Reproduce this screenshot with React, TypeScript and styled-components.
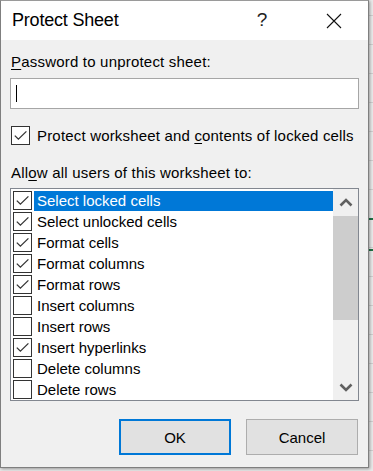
import React from "react";
import styled, { createGlobalStyle } from "styled-components";

const GlobalStyle = createGlobalStyle`
  html, body {
    margin: 0;
    padding: 0;
  }
  body {
    width: 373px;
    height: 471px;
    overflow: hidden;
    background-color: #e9e9e9;
    background-image:
      linear-gradient(#1e7145, #1e7145),
      linear-gradient(#1e7145, #1e7145),
      repeating-linear-gradient(to bottom, transparent 0 15px, #cfcfcf 15px 16px, transparent 16px 29px);
    background-size: 100% 2px, 100% 2px, 100% 100%;
    background-position: 0 218px, 0 249px, 0 0;
    background-repeat: no-repeat, no-repeat, repeat;
    font-family: "Liberation Sans", Arial, sans-serif;
  }
`;

const Dialog = styled.div`
  box-sizing: border-box;
  width: 369px;
  height: 468px;
  background: #f0f0f0;
  border: 1px solid #7f7f7f;
  border-top-color: #9a9a9a;
  box-shadow: 1px 1px 3px rgba(0, 0, 0, 0.35);
  display: flex;
  flex-direction: column;
`;

const TitleBar = styled.div`
  height: 39px;
  background: #ffffff;
  display: flex;
  align-items: center;
  padding-left: 11px;
`;

const Title = styled.div`
  flex: 1;
  font-size: 18px;
  color: #000;
  letter-spacing: -0.2px;
`;

const HelpGlyph = styled.div`
  width: 20px;
  font-size: 19px;
  font-weight: 300;
  color: #222;
  text-align: center;
  margin-right: 54px;
  padding-bottom: 2px;
`;

const CloseIcon = styled.svg`
  width: 16px;
  height: 16px;
  margin-right: 26px;
`;

const Body = styled.div`
  flex: 1;
  display: flex;
  flex-direction: column;
  padding: 12px 9px 0 9px;
  font-size: 15px;
  color: #000;
`;

const Label = styled.div<{ $gap?: number }>`
  height: 20px;
  line-height: 20px;
  padding-left: 1px;
  letter-spacing: 0.2px;
  margin-top: ${(p) => p.$gap ?? 0}px;
`;

const Accel = styled.span`
  text-decoration: underline;
  text-underline-offset: 2px;
`;

const Input = styled.div`
  box-sizing: border-box;
  margin-top: 6px;
  width: 349px;
  height: 31px;
  background: #fff;
  border: 1px solid #a6a6a6;
  display: flex;
  align-items: center;
  padding-left: 5px;
`;

const Caret = styled.div`
  width: 1px;
  height: 17px;
  background: #000;
`;

const CheckRow = styled.div`
  margin-top: 16px;
  height: 20px;
  display: flex;
  align-items: center;
  gap: 7px;
  padding-left: 1px;
  letter-spacing: 0.18px;
`;

const Box = styled.div`
  box-sizing: border-box;
  width: 19px;
  height: 19px;
  flex: none;
  background: #fff;
  border: 1px solid #333;
  display: flex;
  align-items: center;
  justify-content: center;
`;

const ListBox = styled.div`
  box-sizing: border-box;
  margin-top: 5px;
  width: 349px;
  height: 213px;
  background: #fff;
  border: 1px solid #828790;
  display: flex;
`;

const Rows = styled.div`
  flex: 1;
  padding-top: 1px;
  display: flex;
  flex-direction: column;
`;

const Row = styled.div`
  height: 21px;
  display: flex;
  align-items: center;
  padding-left: 2px;
`;

const RowText = styled.div<{ $selected?: boolean }>`
  flex: 1;
  height: 20px;
  line-height: 20px;
  margin-left: 2px;
  padding-left: 3px;
  background: ${(p) => (p.$selected ? "#0078d7" : "transparent")};
  color: ${(p) => (p.$selected ? "#fff" : "#000")};
`;

const ScrollBar = styled.div`
  width: 25px;
  background: #f0f0f0;
  display: flex;
  flex-direction: column;
`;

const ScrollButton = styled.div<{ $h: number }>`
  height: ${(p) => p.$h}px;
  display: flex;
  align-items: center;
  justify-content: center;
`;

const Thumb = styled.div`
  height: 104px;
  background: #cdcdcd;
`;

const Track = styled.div`
  flex: 1;
`;

const Buttons = styled.div`
  margin-top: 18px;
  display: flex;
  justify-content: flex-end;
  gap: 15px;
  padding-right: 1px;
`;

const Button = styled.div<{ $default?: boolean }>`
  box-sizing: border-box;
  width: 112px;
  height: 36px;
  background: #e1e1e1;
  border: ${(p) => (p.$default ? "2px solid #0078d7" : "1px solid #adadad")};
  display: flex;
  align-items: center;
  justify-content: center;
  font-size: 15px;
  color: #000;
`;

const Check = () => (
  <svg width="15" height="15" viewBox="0 0 15 15">
    <path d="M1.8 7.6 L5.4 11.2 L13.4 3.4" fill="none" stroke="#333" strokeWidth="1.3" />
  </svg>
);

const Chevron = ({ up }: { up?: boolean }) => (
  <svg width="14" height="9" viewBox="0 0 14 9">
    <path
      d={up ? "M1.5 7.5 L7 2 L12.5 7.5" : "M1.5 1.5 L7 7 L12.5 1.5"}
      fill="none"
      stroke="#606060"
      strokeWidth="2.6"
    />
  </svg>
);

const items: { label: string; checked: boolean }[] = [
  { label: "Select locked cells", checked: true },
  { label: "Select unlocked cells", checked: true },
  { label: "Format cells", checked: true },
  { label: "Format columns", checked: true },
  { label: "Format rows", checked: true },
  { label: "Insert columns", checked: false },
  { label: "Insert rows", checked: false },
  { label: "Insert hyperlinks", checked: true },
  { label: "Delete columns", checked: false },
  { label: "Delete rows", checked: false },
];

export default function App() {
  return (
    <>
      <GlobalStyle />
      <Dialog>
        <TitleBar>
          <Title>Protect Sheet</Title>
          <HelpGlyph>?</HelpGlyph>
          <CloseIcon viewBox="0 0 16 16">
            <path d="M1 1 L15 15 M15 1 L1 15" stroke="#111" strokeWidth="1.1" fill="none" />
          </CloseIcon>
        </TitleBar>
        <Body>
          <Label>
            <Accel>P</Accel>assword to unprotect sheet:
          </Label>
          <Input>
            <Caret />
          </Input>
          <CheckRow>
            <Box>
              <Check />
            </Box>
            <span>
              Protect worksheet and <Accel>c</Accel>ontents of locked cells
            </span>
          </CheckRow>
          <Label $gap={18}>
            All<Accel>o</Accel>w all users of this worksheet to:
          </Label>
          <ListBox>
            <Rows>
              {items.map((it, i) => (
                <Row key={it.label}>
                  <Box>{it.checked && <Check />}</Box>
                  <RowText $selected={i === 0}>{it.label}</RowText>
                </Row>
              ))}
            </Rows>
            <ScrollBar>
              <ScrollButton $h={27}>
                <Chevron up />
              </ScrollButton>
              <Thumb />
              <Track />
              <ScrollButton $h={25}>
                <Chevron />
              </ScrollButton>
            </ScrollBar>
          </ListBox>
          <Buttons>
            <Button $default>OK</Button>
            <Button>Cancel</Button>
          </Buttons>
        </Body>
      </Dialog>
    </>
  );
}
